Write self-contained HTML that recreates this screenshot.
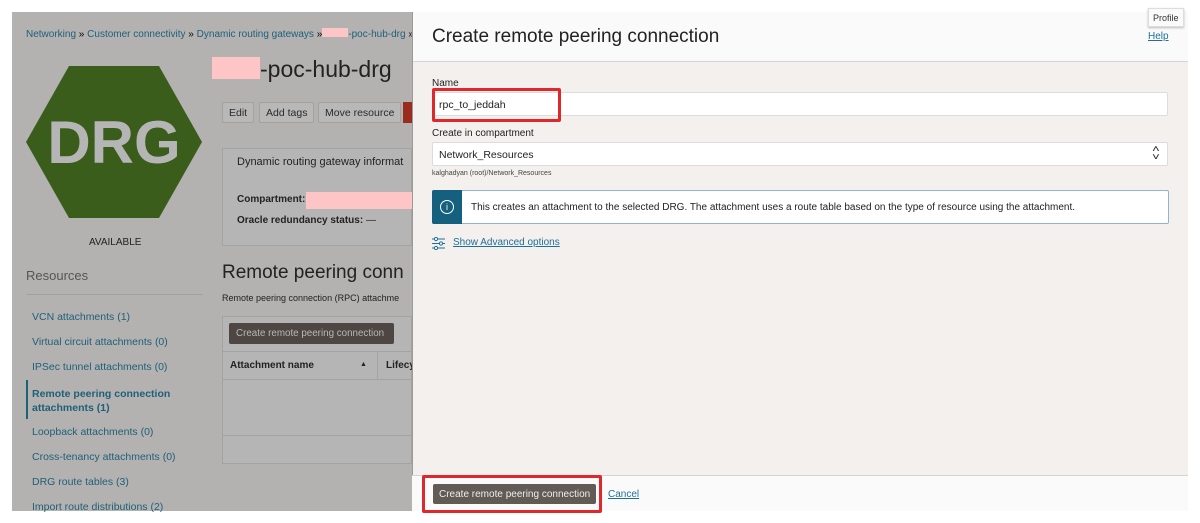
<!DOCTYPE html>
<html><head><meta charset="utf-8"><style>
*{margin:0;padding:0;box-sizing:border-box}
body{width:1200px;height:523px;background:#fff;font-family:"Liberation Sans",Arial,sans-serif;position:relative;overflow:hidden}
.a{position:absolute}
.bg{left:12px;top:12px;width:400px;height:499px;background:#b3b2b1}
.lk{color:#1f5f78}
.bc{font-size:10px;left:26px;top:28px;white-space:nowrap}
.pink{background:#fdc5c5;display:inline-block}
.btn{position:absolute;top:102px;height:21px;border:1px solid #a2a2a2;background:#b8b8b8;border-radius:2px;font-size:10.5px;color:#2a2a2a;padding:4px 6px}
.res a{position:absolute;left:32px;font-size:10.5px;color:#1f5f78;text-decoration:none}
.panel{left:412px;top:12px;width:776px;height:499px;background:#f3f0ed}
.hd{left:412px;top:12px;width:776px;height:50px;background:#fafafa;border-bottom:1px solid #d4d4d4}
.ft{left:412px;top:475px;width:776px;height:36px;background:#fafafa;border-top:1px solid #d4d4d4}
.inp{position:absolute;left:432px;width:736px;height:24px;background:#fff;border:1px solid #dcdcdc;border-radius:2px;font-size:10.5px;color:#222;padding:6px 6px}
.lbl{position:absolute;left:432px;font-size:10px;color:#222}
</style></head><body>
<div class="a bg"></div>
<div class="a bc"><span class="lk">Networking</span> » <span class="lk">Customer connectivity</span> » <span class="lk">Dynamic routing gateways</span> »<span class="pink" style="width:26px;height:9px"></span><span class="lk">-poc-hub-drg</span> »</div>
<svg class="a" style="left:26px;top:66px" width="177" height="153"><polygon points="43,0 133,0 176,76 133,152 43,152 0,76" fill="#3b5d1c"/><text x="88" y="97" text-anchor="middle" font-family="Liberation Sans" font-weight="bold" font-size="60" fill="#b5b5b5">DRG</text></svg>
<div class="a" style="left:89px;top:237px;font-size:10px;color:#222">AVAILABLE</div>
<div class="a" style="left:212px;top:57px;width:48px;height:22px;background:#fdc5c5"></div>
<div class="a" style="left:260px;top:56px;font-size:23px;color:#222">-poc-hub-drg</div>
<div class="btn" style="left:222px">Edit</div>
<div class="btn" style="left:259px">Add tags</div>
<div class="btn" style="left:318px">Move resource</div>
<div class="a" style="left:403px;top:102px;width:9px;height:21px;background:#9b2b1f"></div>
<div class="a" style="left:222px;top:148px;width:190px;height:98px;background:#b5b5b5;border:1px solid #a3a3a3"></div>
<div class="a" style="left:237px;top:156px;font-size:11px;color:#222;white-space:nowrap">Dynamic routing gateway informat</div>
<div class="a" style="left:237px;top:194px;font-size:10px;font-weight:bold;color:#222">Compartment:</div>
<div class="a" style="left:306px;top:192px;width:106px;height:17px;background:#fdc5c5"></div>
<div class="a" style="left:237px;top:215px;font-size:10px;font-weight:bold;color:#222">Oracle redundancy status: <span style="font-weight:normal">—</span></div>
<div class="a" style="left:26px;top:268px;font-size:13px;color:#555">Resources</div>
<div class="a" style="left:26px;top:294px;width:177px;height:1px;background:#a0a0a0"></div>
<div class="res">
<a style="top:311px">VCN attachments (1)</a>
<a style="top:336px">Virtual circuit attachments (0)</a>
<a style="top:361px">IPSec tunnel attachments (0)</a>
<a style="top:387px;font-weight:bold;line-height:14px">Remote peering connection<br>attachments (1)</a>
<a style="top:426px">Loopback attachments (0)</a>
<a style="top:451px">Cross-tenancy attachments (0)</a>
<a style="top:476px">DRG route tables (3)</a>
<a style="top:501px">Import route distributions (2)</a>
</div>
<div class="a" style="left:26px;top:380px;width:2px;height:39px;background:#1f5f78"></div>
<div class="a" style="left:222px;top:262px;font-size:19px;color:#222;white-space:nowrap">Remote peering conn</div>
<div class="a" style="left:222px;top:293px;font-size:9px;color:#222;white-space:nowrap">Remote peering connection (RPC) attachme</div>
<div class="a" style="left:222px;top:316px;width:190px;height:148px;background:#b5b5b5;border:1px solid #a3a3a3"></div>
<div class="a" style="left:229px;top:323px;width:165px;height:21px;background:#4d4643;border-radius:2px;color:#b8b8b8;font-size:9.8px;padding:5px 7px;white-space:nowrap;overflow:hidden">Create remote peering connection</div>
<div class="a" style="left:223px;top:351px;width:189px;height:1px;background:#a3a3a3"></div>
<div class="a" style="left:223px;top:379px;width:189px;height:1px;background:#a3a3a3"></div>
<div class="a" style="left:223px;top:435px;width:189px;height:1px;background:#a3a3a3"></div>
<div class="a" style="left:377px;top:352px;width:1px;height:27px;background:#a3a3a3"></div>
<div class="a" style="left:230px;top:360px;font-size:10px;font-weight:bold;color:#222">Attachment name</div>
<div class="a" style="left:360px;top:361px;font-size:7px;color:#222">▲</div>
<div class="a" style="left:386px;top:360px;font-size:10px;font-weight:bold;color:#222">Lifecy</div>

<div class="a panel"></div>
<div class="a hd"></div>
<div class="a" style="left:412px;top:12px;width:1px;height:499px;background:#9a9a9a"></div>
<div class="a" style="left:432px;top:26px;font-size:19px;color:#222">Create remote peering connection</div>
<div class="a" style="left:1148px;top:31px;font-size:10px;color:#1f6f9a;text-decoration:underline">Help</div>
<div class="a" style="left:1148px;top:8px;width:36px;height:19px;background:#fafafa;border:1px solid #ddd;box-shadow:0 1px 2px #bbb;font-size:9px;color:#333;padding:4px 4px">Profile</div>
<div class="lbl" style="top:78px">Name</div>
<div class="inp" style="top:92px">rpc_to_jeddah</div>
<div class="a" style="left:432px;top:88px;width:129px;height:34px;border:3px solid #e0282c;border-radius:2px"></div>
<div class="lbl" style="top:128px">Create in compartment</div>
<div class="inp" style="top:142px">Network_Resources<span style="position:absolute;right:8px;top:3px;font-size:10px;line-height:8px;transform:scaleX(1.3)">˄<br>˅</span></div>
<div class="lbl" style="top:170px;font-size:7px;color:#444">kalghadyan (root)/Network_Resources</div>
<div class="a" style="left:432px;top:190px;width:737px;height:34px;background:#fff;border:1px solid #8fb6cc;border-radius:2px"></div>
<div class="a" style="left:432px;top:190px;width:30px;height:34px;background:#16607f;border-radius:2px 0 0 2px"></div>
<div class="a" style="left:440px;top:200px;width:14px;height:14px;border:1.3px solid #fff;border-radius:50%;color:#fff;font-size:9px;text-align:center;line-height:12px">i</div>
<div class="a" style="left:471px;top:202px;font-size:10px;color:#222;white-space:nowrap">This creates an attachment to the selected DRG. The attachment uses a route table based on the type of resource using the attachment.</div>
<svg class="a" style="left:432px;top:237px" width="14" height="13"><g stroke="#1f6f9a" stroke-width="1" fill="#fafafa"><line x1="0" y1="2" x2="13" y2="2"/><line x1="0" y1="6.5" x2="13" y2="6.5"/><line x1="0" y1="11" x2="13" y2="11"/><circle cx="4" cy="2" r="1.6"/><circle cx="9" cy="6.5" r="1.6"/><circle cx="4" cy="11" r="1.6"/></g></svg>
<div class="a" style="left:453px;top:237px;font-size:10px;color:#1f6f9a;text-decoration:underline">Show Advanced options</div>
<div class="a ft"></div>
<div class="a" style="left:433px;top:484px;width:163px;height:20px;background:#625a54;border-radius:2px;color:#eee;font-size:10px;padding:5px 6px;white-space:nowrap">Create remote peering connection</div>
<div class="a" style="left:422px;top:475px;width:180px;height:38px;border:3px solid #e0282c;border-radius:2px"></div>
<div class="a" style="left:608px;top:489px;font-size:10px;color:#1f6f9a;text-decoration:underline">Cancel</div>
</body></html>
